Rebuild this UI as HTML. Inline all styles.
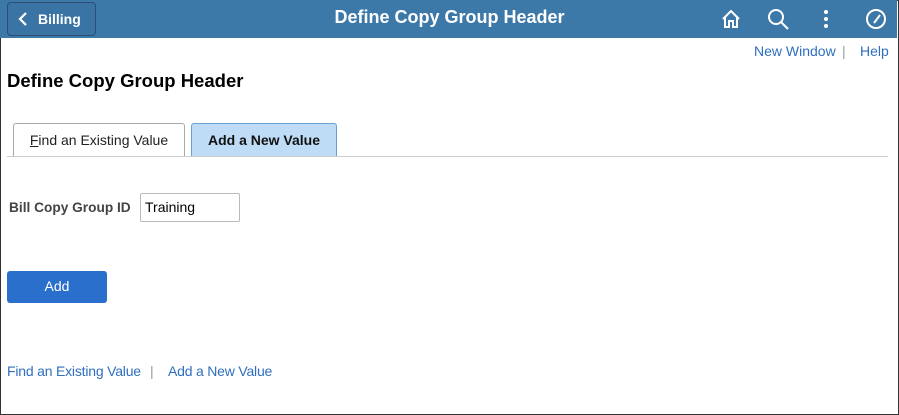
<!DOCTYPE html>
<html><head><style>
body{margin:0;width:899px;height:415px;overflow:hidden;font-family:"Liberation Sans",Arial,sans-serif;background:#fff}
.frame{position:absolute;left:0;top:0;width:897px;height:413px;border:1px solid #333}
.hdr{position:absolute;left:0;top:0;width:897px;height:38px;background:#3c78a8}
.back{position:absolute;left:7px;top:2px;width:87px;height:32px;border:1px solid #2a4f72;border-radius:4px;background:#3a74a4;color:#fff;font-weight:bold;font-size:14px;line-height:32px}
.title{position:absolute;left:0;width:899px;top:7px;text-align:center;color:#fff;font-size:18px;font-weight:bold}
a{color:#2f6fbf;text-decoration:none;font-size:14px;position:absolute}
.tab{position:absolute;top:123px;height:32px;line-height:32px;font-size:14px;text-align:center;border:1px solid #aaa;border-bottom:none;border-radius:3px 3px 0 0}
</style></head><body>
<div class="frame"></div>
<div class="hdr">
<div class="back"><svg style="position:absolute;left:10px;top:9px" width="10" height="14"><path d="M8 1L2 7l6 6" stroke="#fff" stroke-width="2.2" fill="none"/></svg><span style="position:absolute;left:30px">Billing</span></div>
<div class="title">Define Copy Group Header</div>
<svg style="position:absolute;left:720px;top:8px" width="22" height="22" viewBox="0 0 22 22" fill="none" stroke="#fff" stroke-width="2"><path d="M3 11L11 3l8 8M5 9v10h4v-6h4v6h4V9"/></svg>
<svg style="position:absolute;left:767px;top:8px" width="24" height="24" fill="none" stroke="#fff" stroke-width="2"><circle cx="9" cy="9" r="7"/><path d="M14 14l7 7"/></svg>
<svg style="position:absolute;left:822px;top:9px" width="8" height="22" fill="#fff"><circle cx="4" cy="3" r="2"/><circle cx="4" cy="10" r="2"/><circle cx="4" cy="17" r="2"/></svg>
<svg style="position:absolute;left:865px;top:8px" width="22" height="22" fill="none" stroke="#fff" stroke-width="2"><circle cx="11" cy="11" r="9"/><path d="M15 7l-6 8"/></svg>
</div>
<a style="left:754px;top:43px">New Window</a><span style="position:absolute;left:842px;top:43px;color:#999;font-size:14px">|</span><a style="left:860px;top:43px">Help</a>
<div style="position:absolute;left:7px;top:70px;font-size:18.5px;font-weight:bold">Define Copy Group Header</div>
<div class="tab" style="left:13px;width:170px;background:#fff;color:#222"><u>F</u>ind an Existing Value</div>
<div class="tab" style="left:191px;width:144px;background:#bfdcf6;border-color:#6a9fd0;font-weight:bold;color:#111">Add a New Value</div>
<div style="position:absolute;left:7px;top:156px;width:881px;border-top:1px solid #ccc"></div>
<div style="position:absolute;left:9px;top:200px;font-size:13.7px;font-weight:bold;color:#444">Bill Copy Group ID</div>
<div style="position:absolute;left:140px;top:193px;border:1px solid #bbb;border-radius:2px;font-size:14px;line-height:27px;padding-left:4px;box-sizing:border-box;width:100px;height:29px">Training</div>
<div style="position:absolute;left:7px;top:271px;width:100px;height:32px;background:#2a6fcb;border-radius:3px;color:#fff;font-size:14px;line-height:30px;text-align:center">Add</div>
<a style="left:7px;top:363px;letter-spacing:-0.2px">Find an Existing Value</a><span style="position:absolute;left:150px;top:363px;color:#999;font-size:14px">|</span><a style="left:168px;top:363px;letter-spacing:-0.2px">Add a New Value</a>
</body></html>
